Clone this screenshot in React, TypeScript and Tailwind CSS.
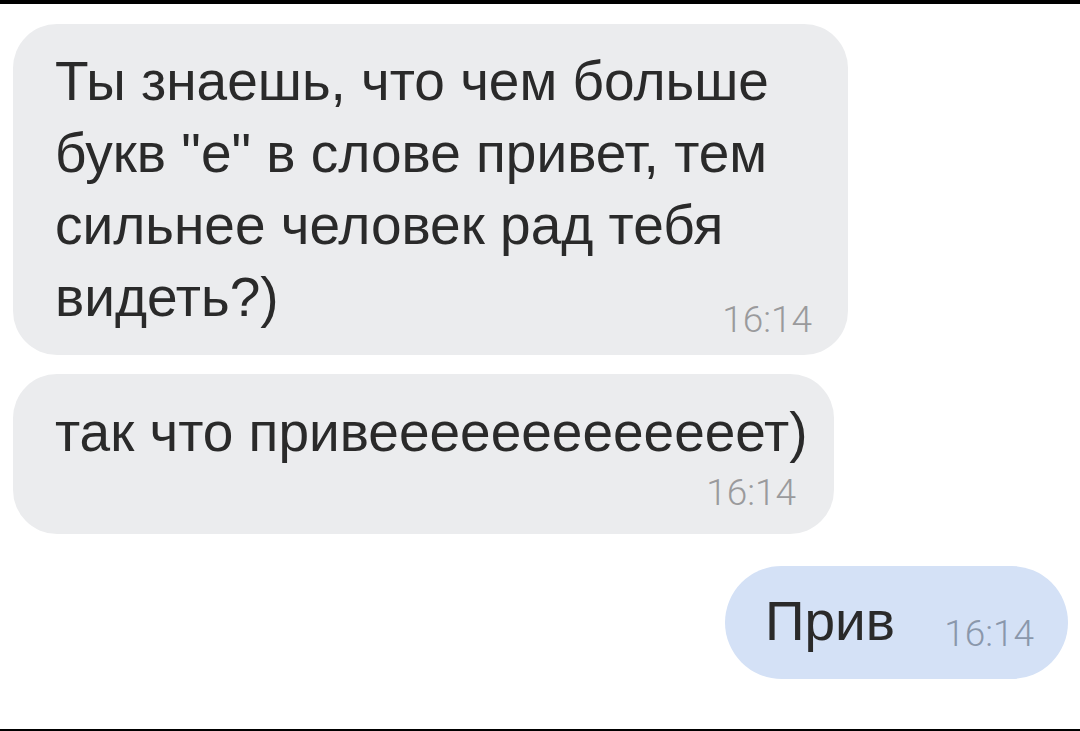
import React from 'react';

const sans = { fontFamily: '"Liberation Sans", Arial, sans-serif' };
const thin = { fontFamily: 'Roboto, "Liberation Sans", sans-serif' };

const App: React.FC = () => {
  return (
    <div className="h-screen w-full bg-white flex flex-col overflow-hidden" style={sans}>
      <div className="h-[4px] bg-black shrink-0" />

      <div className="flex-1 flex flex-col px-[13px]">
        {/* incoming */}
        <div className="mt-[20px] w-[835px] bg-[#ebecee] rounded-[44px] pl-[42px] pr-[36px] pt-[21px] pb-[17px] flow-root">
          <p className="text-[55px] leading-[72px] text-[#2a2a2a]">
            Ты знаешь, что чем больше букв "е" в слове привет, тем сильнее человек рад тебя видеть?)
            <span className="float-right mt-[40px] text-[37px] leading-[37px] font-light text-[#9a9a9c]" style={thin}>16:14</span>
          </p>
        </div>

        <div className="mt-[19px] w-[821px] bg-[#ebecee] rounded-[44px] pl-[42px] pr-[38px] pt-[22px] pb-[23px]">
          <p className="text-[55px] leading-[72px] text-[#2a2a2a] whitespace-nowrap">так что привееееееееееееет)</p>
          <div className="flex justify-end mt-[6px]">
            <span className="text-[37px] leading-[37px] font-light text-[#9a9a9c]" style={thin}>16:14</span>
          </div>
        </div>

        {/* outgoing */}
        <div className="mt-[32px] self-end -mr-[1px] h-[113px] w-[343px] bg-[#d4e1f6] rounded-full pl-[40px] pr-[34px] flex items-center">
          <span className="text-[55px] leading-[72px] text-[#2a2a2a] mb-[4px]">Прив</span>
          <span className="ml-auto mt-[22px] text-[37px] leading-[37px] font-light text-[#8a97ab]" style={thin}>16:14</span>
        </div>
      </div>

      <div className="h-[2px] bg-black shrink-0" />
    </div>
  );
};

export default App;
